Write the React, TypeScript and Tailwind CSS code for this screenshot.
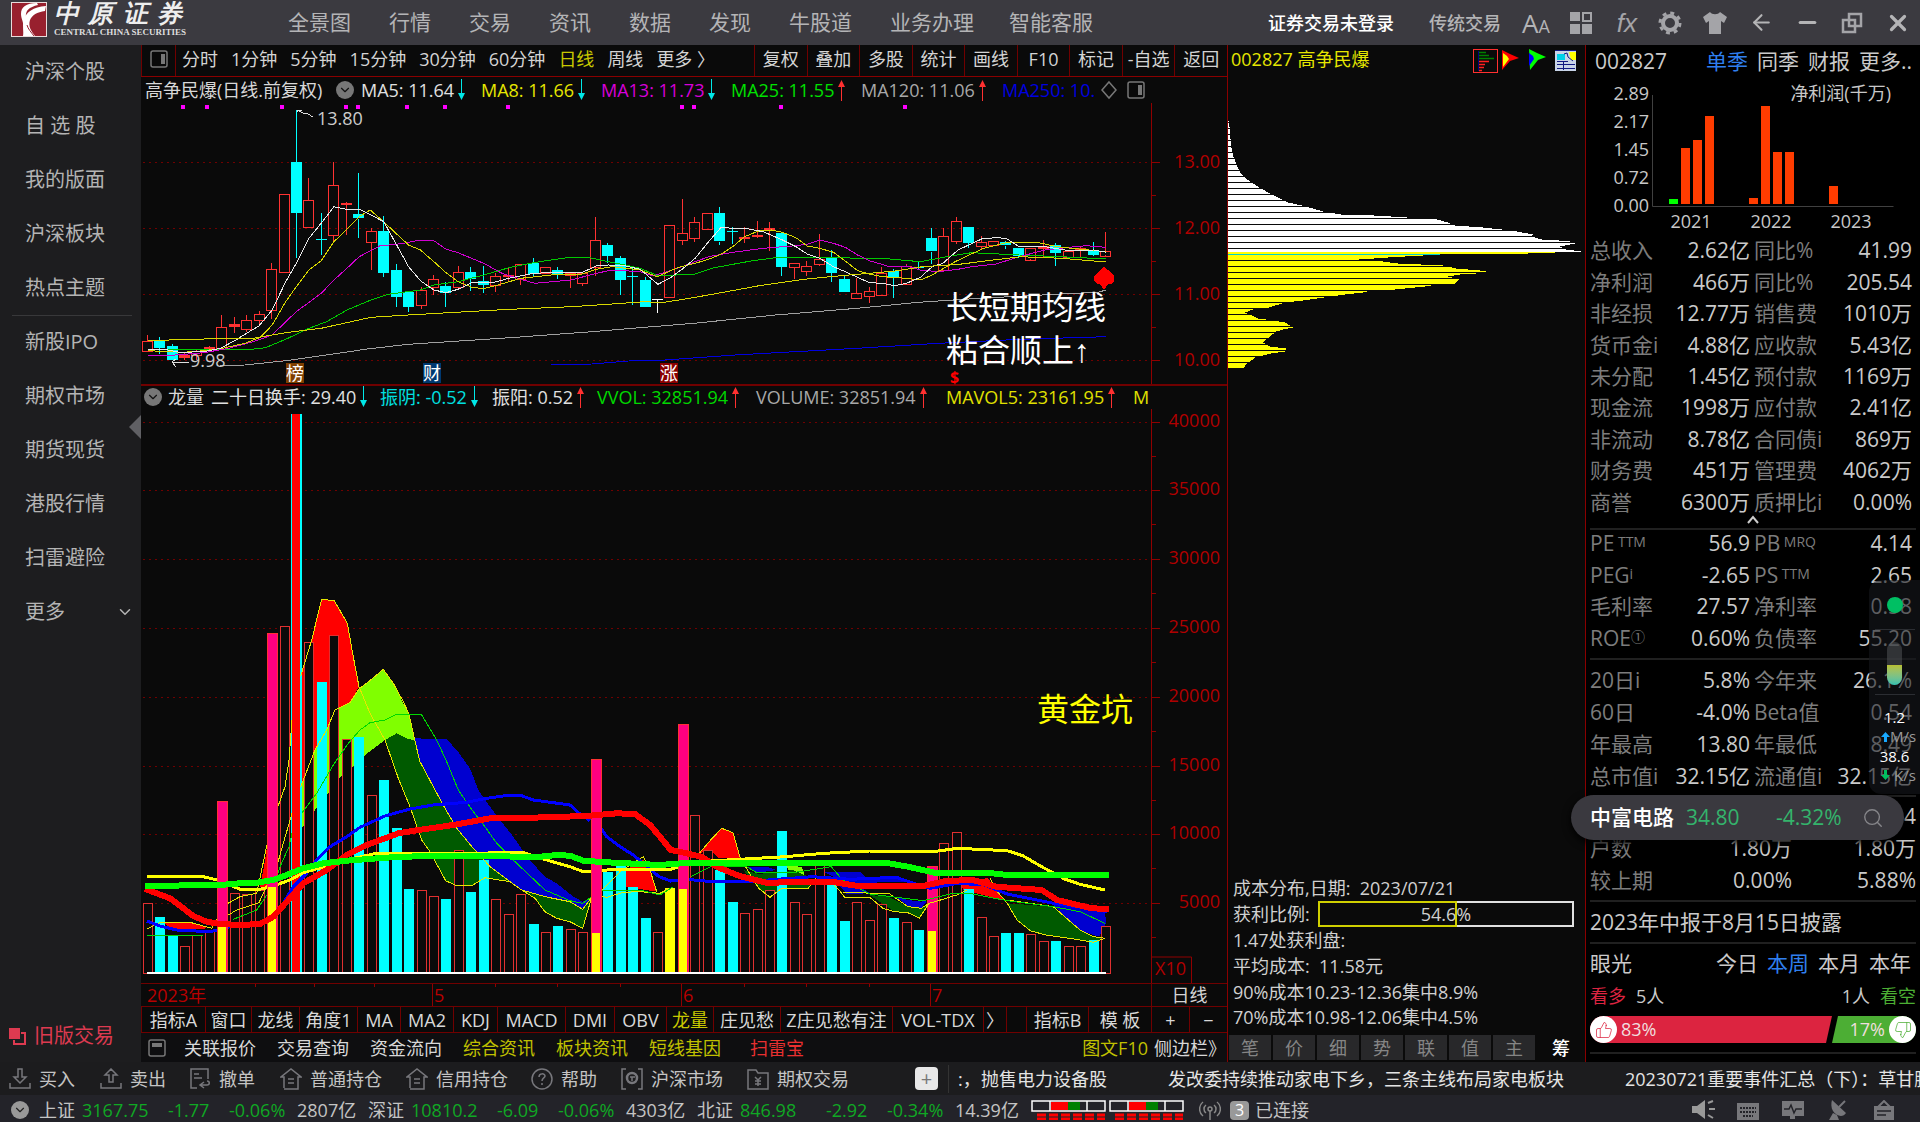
import type { ReactNode } from "react";
import { ArrowLeft, ChevronDown, Minus, Search, ThumbsDown, ThumbsUp, X } from "lucide-react";

const menu = ["全景图", "行情", "交易", "资讯", "数据", "发现", "牛股道", "业务办理", "智能客服"];

const sidebar = [
  "沪深个股",
  "自 选 股",
  "我的版面",
  "沪深板块",
  "热点主题",
  "新股IPO",
  "期权市场",
  "期货现货",
  "港股行情",
  "扫雷避险",
];

const periods = ["分时", "1分钟", "5分钟", "15分钟", "30分钟", "60分钟", "日线", "周线", "更多 〉"];
const tools = ["复权", "叠加", "多股", "统计", "画线", "F10", "标记", "-自选", "返回"];

type Legend = { text: string; color: string; width: string; dir?: "up" | "down" };

const maLegend: Legend[] = [
  { text: "MA5: 11.64", color: "text-[#e0e0e0]", width: "w-[120px]", dir: "down" },
  { text: "MA8: 11.66", color: "text-[#e6e600]", width: "w-[120px]", dir: "down" },
  { text: "MA13: 11.73", color: "text-[#d800d8]", width: "w-[130px]", dir: "down" },
  { text: "MA25: 11.55", color: "text-[#00e000]", width: "w-[130px]", dir: "up" },
  { text: "MA120: 11.06", color: "text-[#a8a8a8]", width: "w-[141px]", dir: "up" },
  { text: "MA250: 10.", color: "text-[#0000e0]", width: "w-[98px]" },
];

const volLegend: Legend[] = [
  { text: "龙量", color: "text-[#d8d8d8]", width: "w-[43px]" },
  { text: "二十日换手: 29.40", color: "text-[#e0e0e0]", width: "w-[169px]", dir: "down" },
  { text: "振阴: -0.52", color: "text-[#00e0e0]", width: "w-[112px]", dir: "down" },
  { text: "振阳: 0.52", color: "text-[#e0e0e0]", width: "w-[105px]", dir: "up" },
  { text: "VVOL: 32851.94", color: "text-[#00d800]", width: "w-[159px]", dir: "up" },
  { text: "VOLUME: 32851.94", color: "text-[#a8a8a8]", width: "w-[190px]", dir: "up" },
  { text: "MAVOL5: 23161.95", color: "text-[#e0e000]", width: "w-[187px]", dir: "up" },
  { text: "M", color: "text-[#e0e000]", width: "w-4" },
];

// r = hollow red, c = solid cyan, w = white; then high, open/close top, bottom, low
type Candle = [string, number, number, number, number];
const candles: Candle[] = [
  ["r", 1005, 1023, 1052, 1057], ["c", 1010, 1023, 1045, 1062], ["c", 1033, 1037, 1078, 1080],
  ["r", 1060, 1065, 1075, 1080], ["r", 1050, 1053, 1065, 1080], ["r", 1038, 1040, 1050, 1052],
  ["r", 945, 982, 1048, 1050], ["r", 950, 973, 982, 998], ["r", 945, 961, 988, 997],
  ["r", 932, 943, 961, 975], ["r", 788, 807, 930, 958], ["r", 583, 583, 817, 817],
  ["c", 330, 486, 638, 773], ["r", 535, 600, 682, 685], ["c", 640, 716, 719, 765],
  ["r", 486, 555, 705, 723], ["r", 606, 608, 614, 705], ["c", 520, 643, 656, 715],
  ["r", 685, 694, 727, 810], ["c", 648, 693, 818, 832], ["c", 792, 810, 890, 922],
  ["c", 877, 877, 922, 936], ["r", 862, 871, 916, 926], ["r", 825, 838, 862, 885],
  ["c", 845, 858, 880, 922], ["r", 797, 817, 862, 868], ["c", 802, 815, 835, 872],
  ["c", 797, 842, 855, 878], ["r", 820, 829, 855, 877], ["r", 803, 825, 830, 845],
  ["r", 793, 793, 838, 855], ["c", 773, 790, 822, 828], ["r", 802, 802, 820, 820],
  ["c", 800, 810, 822, 838], ["r", 815, 820, 828, 863], ["r", 815, 820, 849, 858],
  ["r", 652, 720, 800, 827], ["c", 730, 734, 768, 790], ["c", 768, 774, 840, 886],
  ["c", 805, 829, 832, 915], ["c", 832, 840, 922, 922], ["w", 898, 898, 901, 940],
  ["r", 676, 676, 893, 893], ["r", 598, 700, 722, 735], ["r", 652, 667, 714, 725],
  ["r", 640, 640, 688, 688], ["c", 620, 640, 725, 735], ["c", 680, 694, 697, 733],
  ["r", 680, 710, 716, 728], ["r", 662, 705, 710, 713], ["r", 667, 685, 690, 752],
  ["c", 698, 698, 800, 827], ["r", 790, 790, 803, 836], ["r", 783, 797, 812, 828],
  ["r", 702, 778, 794, 797], ["c", 750, 773, 818, 845], ["c", 827, 837, 877, 877],
  ["r", 835, 880, 894, 896], ["r", 862, 874, 889, 908], ["r", 800, 818, 885, 888],
  ["c", 808, 813, 833, 895], ["r", 792, 797, 852, 852], ["c", 785, 801, 804, 808],
  ["c", 683, 715, 755, 792], ["r", 683, 708, 810, 815], ["r", 652, 664, 725, 733],
  ["c", 680, 680, 728, 745], ["r", 708, 727, 738, 750], ["r", 722, 722, 735, 735],
  ["c", 722, 727, 737, 748], ["c", 743, 743, 768, 775], ["r", 743, 743, 778, 782],
  ["r", 720, 738, 748, 770], ["c", 730, 735, 760, 797], ["r", 752, 752, 770, 770],
  ["r", 738, 745, 752, 775], ["c", 725, 750, 765, 768], ["r", 697, 752, 766, 772],
];

const maLines: [string, string][] = [
  ["#00c800", "362,1048 600,1050 650,1043 700,1018 757,985 800,965 850,930 909,900 950,883 1030,870 1063,855 1122,845 1185,825 1247,803 1306,788 1395,772 1440,772 1490,785 1540,797 1568,805 1612,827 1700,823 1750,803 1840,783 1900,773 2000,773 2160,775 2255,785 2320,770 2380,758 2497,765 2600,770 2710,777"],
  ["#d000d0", "362,1068 430,1065 500,1058 560,1045 620,1025 667,1005 700,965 726,935 787,880 818,840 850,805 880,770 930,738 990,730 1020,722 1063,722 1093,748 1122,758 1185,790 1230,820 1276,838 1310,850 1400,840 1461,820 1500,810 1568,815 1600,828 1660,805 1736,770 1795,757 1870,745 1940,738 1978,733 2008,720 2042,730 2071,742 2101,765 2130,782 2180,800 2221,798 2255,810 2300,815 2347,808 2380,800 2440,792 2497,770 2560,750 2620,742 2660,737 2710,742"],
  ["#d8d800", "362,1052 450,1057 500,1052 545,1045 600,1030 638,1012 667,975 700,905 726,860 757,810 787,782 818,725 850,688 880,650 907,630 940,665 972,702 1001,735 1030,750 1063,785 1093,818 1122,845 1156,862 1185,866 1214,857 1276,835 1350,825 1427,822 1461,808 1500,800 1568,810 1610,830 1660,803 1703,790 1736,778 1766,763 1795,740 1824,710 1860,692 1890,690 1917,697 1950,713 1978,738 2008,745 2042,757 2071,783 2101,812 2130,822 2163,830 2221,835 2255,840 2284,825 2340,785 2380,762 2410,745 2465,728 2540,727 2590,740 2650,748 2710,755"],
  ["#e8e8e8", "362,1047 400,1047 440,1057 500,1055 540,1045 575,1022 604,1000 634,978 667,930 700,845 726,790 757,715 790,665 818,620 850,628 880,628 909,645 940,665 972,735 1001,800 1030,842 1063,870 1093,878 1122,868 1156,848 1214,846 1247,835 1306,820 1368,817 1427,817 1461,798 1490,795 1530,797 1568,808 1582,822 1612,853 1643,833 1674,805 1703,775 1736,725 1766,683 1830,686 1870,695 1917,720 1950,740 1978,762 2008,775 2042,800 2071,815 2101,832 2130,848 2163,850 2192,857 2221,850 2255,832 2284,800 2310,790 2347,750 2405,717 2440,713 2465,715 2497,740 2560,740 2620,752 2680,750 2710,757"],
  ["#d8d800", "362,1023 450,1018 620,1015 700,998 787,985 909,952 1000,945 1100,938 1250,928 1400,920 1500,912 1580,905 1620,908 1690,895 1780,875 1860,857 1970,838 2060,827 2130,820 2200,812 2260,800 2350,793 2420,782 2500,770 2600,775 2710,786"],
  ["#a0a0a0", "540,1097 600,1095 700,1082 800,1065 900,1047 1000,1033 1250,1013 1450,995 1568,983 1700,970 1900,945 2100,925 2250,907 2400,895 2600,882 2690,877 2710,870"],
  ["#0000e0", "1350,1095 1450,1092 1540,1083 1630,1080 1800,1065 2100,1045 2300,1030 2500,1018 2710,1010"],
];

// p = pink over yellow (third value is where the yellow starts), y = yellow
type Volume = [string, number, number?];
const volumes: Volume[] = [
  ["r", 640], ["c", 680], ["c", 737], ["r", 767], ["r", 735], ["r", 720], ["p", 333, 700], ["r", 608],
  ["r", 612], ["r", 600], ["p", -170, 590], ["r", -192], ["x", -828], ["r", -143], ["c", -23], ["r", -165],
  ["r", 146], ["c", 140], ["r", 316], ["c", 270], ["c", 414], ["c", 598], ["r", 600], ["r", 618],
  ["c", 626], ["r", 480], ["c", 607], ["c", 510], ["r", 628], ["r", 672], ["r", 613], ["c", 703],
  ["r", 725], ["c", 707], ["r", 716], ["r", 725], ["p", 208, 728], ["c", 545], ["c", 510], ["c", 590],
  ["c", 685], ["r", 725], ["y", 595], ["p", 103, 597], ["r", 375], ["r", 480], ["c", 540], ["c", 635],
  ["r", 668], ["r", 658], ["r", 600], ["c", 423], ["r", 637], ["r", 672], ["r", 525], ["c", 580],
  ["c", 693], ["r", 637], ["r", 690], ["r", 642], ["c", 685], ["r", 695], ["c", 720], ["p", 527, 723],
  ["r", 460], ["r", 425], ["c", 598], ["r", 682], ["r", 737], ["c", 730], ["c", 730], ["r", 732],
  ["r", 753], ["c", 752], ["r", 767], ["r", 767], ["c", 750], ["r", 708],
];

const areas: [string, string][] = [
  ["#ff0000", "482,-42 515,-150 545,-272 583,-268 622,-200 640,-100 657,-10 630,38 585,60 560,120 525,180 490,270 482,290"],
  ["#80ff00", "585,60 630,38 657,-3 692,-30 730,-62 760,-20 790,40 807,72 824,150 805,147 770,130 735,150 675,195 640,230 597,265 565,310 525,360 482,420 482,290 525,180 560,120"],
  ["#005a00", "735,150 770,130 805,147 824,150 840,215 880,290 915,355 950,415 1000,475 1050,530 1110,575 1035,563 995,587 945,585 917,572 870,485 845,450 810,350 775,265"],
  ["#0000d0", "824,145 920,148 950,180 990,235 1015,300 1050,350 1080,390 1120,440 1160,500 1215,560 1250,580 1300,620 1328,635 1355,620 1328,655 1290,635 1215,620 1145,600 1110,575 1050,530 1000,475 950,415 915,355 880,290 840,215"],
  ["#005a00", "1145,600 1215,620 1290,635 1328,658 1355,622 1328,715 1290,695 1250,685 1215,665 1185,625"],
  ["#ff0000", "75,700 150,697 205,715 100,722"],
  ["#ff0000", "360,590 372,530 384,450 384,600"],
  ["#ff0000", "1458,540 1510,510 1530,540 1550,605 1458,590"],
  ["#ff0000", "1678,490 1712,450 1745,415 1779,428 1801,505 1735,505 1712,480"],
  ["#80ff00", "1940,528 1985,530 2000,572 1950,548"],
  ["#0000d0", "1821,530 1879,530 1908,540 1856,548"],
  ["#005a00", "1810,540 1856,552 1959,540 2005,560 2011,595 1925,595 1890,622 1856,595"],
  ["#0000d0", "2051,545 2160,545 2177,562 2281,565 2304,575 2120,580"],
  ["#0000d0", "2097,585 2166,595 2190,610 2120,612"],
  ["#005a00", "2189,615 2246,620 2304,650 2344,655 2367,640 2338,685 2304,668 2263,665"],
  ["#0000d0", "2269,622 2304,630 2344,635 2361,632 2344,655 2304,648"],
  ["#ff0000", "2459,570 2545,565 2568,600 2596,632 2510,610 2470,600"],
  ["#005a00", "2602,640 2740,650 2774,680 2820,720 2860,740 2895,745 2860,757 2809,748 2717,735 2671,722 2631,690"],
  ["#0000d0", "2740,645 2895,660 2898,700 2878,740 2820,722 2774,680"],
];

const volLines: [string, number, string][] = [
  ["#e6e600", 1, "20,718 60,698 150,697 215,715 255,645 300,620 350,610 384,450"],
  ["#e6e600", 1, "410,360 435,290 447,210 456,90"],
  ["#e6e600", 1, "482,-42 515,-150 545,-272 583,-268 622,-200 640,-100 657,-10 690,70 735,150 775,265 810,350 845,450 870,485 917,572 945,585 995,587 1035,563 1110,575 1145,600 1215,620 1290,635 1328,658 1355,622"],
  ["#e6e600", 1, "240,690 290,660 357,638 384,580"],
  ["#e6e600", 1, "410,530 430,460 456,370"],
  ["#e6e600", 1, "482,290 490,270 525,180 560,120 585,60 630,38 657,-3 692,-30 730,-62 760,-20 790,35 807,72 824,150 840,215 880,290 915,355 950,415 1000,475 1050,530 1110,575 1145,600 1185,625 1215,665 1250,685 1290,695 1328,715 1355,622"],
  ["#e6e600", 1, "1382,605 1440,545 1510,500 1530,540 1550,605"],
  ["#e6e600", 1, "1382,618 1400,622 1450,607 1500,605 1560,610 1600,590"],
  ["#e6e600", 1, "1678,490 1712,450 1745,415 1779,428 1801,505 1856,595 1890,622 1925,595 2005,595 2030,560 2063,565 2097,600 2114,622 2189,622 2229,655 2263,665 2304,668 2338,685 2367,640"],
  ["#e6e600", 1, "2108,608 2246,610 2304,650 2344,655 2367,640 2395,632 2450,615 2480,600"],
  ["#e6e600", 1, "2550,565 2568,600 2602,640 2631,690 2671,722 2717,735 2809,748 2860,757 2895,745"],
  ["#e6e600", 1, "2602,630 2740,650 2774,680 2820,720 2860,740 2895,745"],
  ["#00d800", 1, "20,738 190,737"],
  ["#00d800", 1, "280,688 350,660 384,610"],
  ["#00d800", 1, "410,560 420,530 447,470 456,430"],
  ["#00d800", 1, "485,370 530,310 580,225 625,160 660,120 690,98 735,90 770,73 845,75 890,150 920,215 955,300 1000,365 1035,410 1070,460 1125,515 1215,600 1290,632 1328,640 1355,620"],
  ["#00d800", 1, "1385,600 1500,600 1560,615 1600,590"],
  ["#00d800", 1, "1652,560 1712,530 1820,530 1850,548 1959,548 2074,530 2108,570 2189,612 2350,632 2440,610 2487,610 2602,632 2740,650 2820,665 2895,700"],
  ["#0000ff", 3, "20,693 60,708 110,720 210,725 270,710"],
  ["#0000ff", 3, "405,662 430,640 460,590 500,550 530,510 570,470 620,440 660,412 735,378 810,357 880,345 980,337 1040,325 1090,318 1145,317 1180,330 1290,345 1320,372 1350,392"],
  ["#0000ff", 3, "1383,415 1400,440 1440,470 1480,495 1510,520 1557,560 1592,573 1638,568 1695,573 1844,573 2017,560 2131,568 2269,562 2315,578 2372,595 2453,580 2533,585 2602,612 2740,640 2843,655 2900,665"],
  ["#ffff00", 3, "20,560 190,560 240,572 300,598 350,600 400,588 450,570 490,548 620,510 700,492 1150,488 1230,513 1290,530 1330,545 1400,540 1560,538 1592,538 1672,515 1936,500 2051,490 2189,483 2395,483 2453,475 2602,482 2648,497 2705,530 2774,567 2820,583 2895,600"],
  ["#ff0000", 6, "15,597 90,625 130,655 160,678 200,695 240,702 300,705 360,702 400,680 440,635 490,580 560,540 620,495 680,465 735,445 775,430 850,418 940,405 1050,385 1230,382 1350,377 1430,370 1485,372 1530,405 1560,440 1592,480 1626,487 1684,500 1730,530 1798,558 1879,578 2074,575 2154,588 2350,588 2418,573 2499,570 2568,590 2705,600 2751,630 2855,655 2906,657"],
  ["#00ff00", 6, "15,587 230,586 300,580 350,578 400,570 440,555 490,535 550,520 620,512 735,503 850,498 950,497 1150,500 1185,502 1250,495 1290,497 1330,512 1400,517 1560,525 1626,520 2246,520 2304,530 2384,548 2556,550 2602,555 2906,555"],
];

// y, width of the chip distribution outline
const chips: [number, number][] = [
  [120, 1], [133, 2], [145, 3], [155, 5], [165, 9], [172, 12], [178, 18], [185, 28], [192, 40], [198, 52],
  [202, 60], [206, 78], [211, 95], [214, 113], [215, 146], [217, 179], [219, 209], [222, 220], [225, 227],
  [227, 255], [230, 283], [234, 305], [236, 303], [239, 314], [240, 331], [242, 352], [246, 332], [249, 338],
  [251, 353], [253, 300], [254, 212], [257, 160], [259, 131], [260, 147], [263, 170], [265, 215], [268, 228],
  [270, 252], [272, 263], [274, 232], [276, 220], [279, 231], [283, 227], [284, 209], [286, 197], [289, 167],
  [290, 143], [292, 135], [294, 117], [297, 96], [300, 75], [302, 57], [307, 41], [309, 25], [312, 17],
  [318, 30], [320, 45], [322, 57], [327, 65], [329, 55], [331, 48], [335, 43], [342, 35], [346, 42],
  [348, 58], [351, 57], [353, 43], [357, 27], [361, 22], [364, 18], [367, 16],
];

const financials = [
  ["总收入", "2.62亿", "同比%", "41.99"],
  ["净利润", "466万", "同比%", "205.54"],
  ["非经损", "12.77万", "销售费", "1010万"],
  ["货币金i", "4.88亿", "应收款", "5.43亿"],
  ["未分配", "1.45亿", "预付款", "1169万"],
  ["现金流", "1998万", "应付款", "2.41亿"],
  ["非流动", "8.78亿", "合同债i", "869万"],
  ["财务费", "451万", "管理费", "4062万"],
  ["商誉", "6300万", "质押比i", "0.00%"],
];
const ratios = [
  ["PE^ TTM", "56.9", "PB^ MRQ", "4.14"],
  ["PEG^i", "-2.65", "PS^ TTM", "2.65"],
  ["毛利率", "27.57", "净利率", "0.58"],
  ["ROE^①", "0.60%", "负债率", "55.20"],
];
const market = [
  ["20日i", "5.8%", "今年来", "26.1%"],
  ["60日", "-4.0%", "Beta值", "0.54"],
  ["年最高", "13.80", "年最低", "8.49"],
  ["总市值i", "32.15亿", "流通值i", "32.15亿"],
];

const profitBars = [
  [1669, 199, "#00ff00"], [1681, 148, "#ff3c00"], [1693, 140, "#ff3c00"], [1705, 116, "#ff3c00"],
  [1749, 198, "#ff3c00"], [1761, 106, "#ff3c00"], [1773, 152, "#ff3c00"], [1785, 152, "#ff3c00"],
  [1829, 186, "#ff3c00"],
] as [number, number, string][];

const indicators: [string, string][] = [
  ["指标A", "w-[64px]"], ["窗口", "w-[46px]"], ["龙线", "w-[48px]"], ["角度1", "w-[58px]"], ["MA", "w-[43px]"],
  ["MA2", "w-[53px]"], ["KDJ", "w-[44px]"], ["MACD", "w-[68px]"], ["DMI", "w-[49px]"], ["OBV", "w-[52px]"],
  ["龙量", "w-[47px]"], ["庄见愁", "w-[67px]"], ["Z庄见愁有注", "w-[112px]"], ["VOL-TDX", "w-[91px]"],
  ["〉", "w-[23px]"], ["", "w-[20px]"], ["指标B", "w-[62px]"], ["模 板", "w-[63px]"], ["+", "w-[38px]"],
  ["−", "w-[38px]"],
];

const barX = (i: number) => 147.7 + i * 12.446;

const toPoints = (raw: string, fx: (n: number) => number, fy: (n: number) => number) =>
  raw
    .split(" ")
    .map((p) => {
      const [x, y] = p.split(",").map(Number);
      return `${fx(x).toFixed(1)},${fy(y).toFixed(1)}`;
    })
    .join(" ");

const priceX = (n: number) => n / 2.45;
const priceY = (n: number) => n / 3;
const volX = (n: number) => 140 + n / 3;
const volY = (n: number) => 690 + n / 3;

const chipWidth = (y: number) => {
  const i = chips.findIndex(([cy]) => cy >= y);
  if (i <= 0) return chips[0][1];
  const [y0, w0] = chips[i - 1];
  const [y1, w1] = chips[i];
  return w0 + ((w1 - w0) * (y - y0)) / (y1 - y0);
};

const Arrow = ({ dir }: { dir: "up" | "down" }) => (
  <svg width="9" height="22" viewBox="0 0 9 22" className="ml-[3px] shrink-0">
    {dir === "down" ? (
      <path d="M4 0h1v14h3l-3.500 7-3.500-7h3z" fill="#00e8e8" />
    ) : (
      <path d="M4 22h1v-14h3l-3.500-7-3.500 7h3z" fill="#ff3030" />
    )}
  </svg>
);

const LegendItem = ({ item }: { item: Legend }) => (
  <div className={`flex shrink-0 items-center whitespace-pre ${item.width} ${item.color}`}>
    {item.text}
    {item.dir && <Arrow dir={item.dir} />}
  </div>
);

const RoundToggle = ({ label }: { label: string }) => (
  <button aria-label={label} className="flex size-[18px] shrink-0 items-center justify-center rounded-full bg-[#777] text-[#111]">
    <ChevronDown size={14} />
  </button>
);

const PanelIcon = () => (
  <svg width="18" height="18" viewBox="0 0 18 18" className="shrink-0">
    <rect x="1" y="1" width="16" height="16" rx="2" fill="none" stroke="#777" strokeWidth="1.500" />
    <rect x="11" y="4" width="4" height="10" fill="#777" />
  </svg>
);

const Logo = () => (
  <div className="flex w-[288px] shrink-0 gap-[7px] pl-[11px] pt-[2px]">
    <svg width="36" height="35" viewBox="0 0 36 35">
      <rect width="36" height="35" fill="#e8dcdc" />
      <rect x="1" y="1" width="34" height="33" fill="#98202e" />
      <path d="M26 1C15 1 10 5 10 12C10 17 13 20 12 25C15 22 16 19 15 15C14 9 18 5 27 3z" fill="#fff" />
      <path d="M35 4C22 5 15 10 13 18C11 25 13 30 12 34H24C20 29 17 24 19 18C21 13 26 10 34 9z" fill="#fff" />
      <path d="M16 23C17 27 20 30 23 34" fill="none" stroke="#98202e" strokeWidth="1" />
    </svg>
    <div className="w-[128px]">
      <div className="flex h-6 justify-between font-serif text-[25px] font-bold italic leading-6 text-[#eee]">
        <span>中</span>
        <span>原</span>
        <span>证</span>
        <span>券</span>
      </div>
      <p className="whitespace-nowrap font-['Liberation_Serif',serif] text-[9px] font-bold leading-3 text-[#ddd]">
        CENTRAL CHINA SECURITIES
      </p>
    </div>
  </div>
);

const Header = () => (
  <header className="flex h-[45px] shrink-0 bg-[#3b3a40] text-[#b4b4b6]">
    <Logo />
    <nav className="flex h-9 flex-1 gap-[38px] text-[21px] leading-[45px]">
      {menu.map((m, i) => (
        <a key={m} href="#" className={i > 7 ? "-ml-[3px] whitespace-nowrap" : "whitespace-nowrap"}>
          {m}
        </a>
      ))}
    </nav>
    <div className="flex h-[45px] items-center pr-[9px]">
      <button className="mr-[35px] text-lg font-medium text-white">证券交易未登录</button>
      <button className="mr-[21px] text-lg font-medium">传统交易</button>
      <button aria-label="字体" className="mr-5 flex items-baseline">
        <span className="text-[26px] leading-none">A</span>
        <span className="text-lg leading-none">A</span>
      </button>
      <button aria-label="布局" className="mr-[25px]">
        <svg width="22" height="22" viewBox="0 0 22 22" fill="#a4a4a8">
          <path d="M0 0h10v9H0zM0 12h10v10H0zM12 12h10v10H12z" />
          <path d="M13 1h8v8h-8z" fill="none" stroke="#a4a4a8" strokeWidth="2" />
        </svg>
      </button>
      <button aria-label="公式" className="mr-[21px] font-['Liberation_Sans',sans-serif] text-[26px] italic leading-none text-[#a4a4a8]">
        fx
      </button>
      <button aria-label="设置" className="mr-[21px]">
        <svg width="24" height="24" viewBox="0 0 24 24" stroke="#a4a4a8" fill="none">
          <circle cx="12" cy="12" r="7" strokeWidth="4" />
          <circle cx="12" cy="12" r="10" strokeWidth="3" strokeDasharray="3.900 3.950" />
        </svg>
      </button>
      <button aria-label="皮肤" className="mr-[22px]">
        <svg width="24" height="22" viewBox="0 0 24 22" fill="#a4a4a8">
          <path d="M7 0c2 3 8 3 10 0l7 5-3 6-3-2v13H6V9l-3 2-3-6z" />
        </svg>
      </button>
      <button aria-label="后退" className="mr-[21px]"><ArrowLeft size={25} /></button>
      <button aria-label="最小化" className="mr-[21px]"><Minus size={25} strokeWidth={3} /></button>
      <button aria-label="还原" className="mr-[22px]">
        <svg width="22" height="22" viewBox="0 0 22 22" fill="none" stroke="#a4a4a8" strokeWidth="2.500">
          <path d="M8 2h12v12H8zM2 8h12v12H2z" />
        </svg>
      </button>
      <button aria-label="关闭"><X size={26} strokeWidth={3} /></button>
    </div>
  </header>
);

const Sidebar = () => (
  <aside className="relative flex w-[141px] shrink-0 flex-col bg-[#1d1d1f] text-xl text-[#b4b4b4]">
    {sidebar.map((s) => (
      <div key={s}>
        {s === "新股IPO" && <div className="-mb-px ml-3 h-px w-30 bg-[#38383a]" />}
        <a href="#" className="flex h-[54px] items-center pl-[25px]">
          {s}
        </a>
      </div>
    ))}
    <button className="flex h-[54px] items-center justify-between pl-[25px] pr-[7px]">
      更多 <ChevronDown size={18} />
    </button>
    <button className="mb-[12px] mt-auto flex items-center gap-[8px] pl-[9px] text-[#dd3a50]">
      <svg width="17" height="17" viewBox="0 0 17 17">
        <rect width="11" height="11" fill="#dd3a50" />
        <path d="M12 5h4v11H5v-4" fill="none" stroke="#dd3a50" strokeWidth="2" />
      </svg>
      旧版交易
    </button>
    <button aria-label="收起" className="absolute right-0 top-[370px]">
      <svg width="12" height="24" viewBox="0 0 12 24" fill="#606064">
        <path d="M12 0v24L0 12z" />
      </svg>
    </button>
  </aside>
);

const PriceChart = () => (
  <div className="relative flex h-[281px]">
    <svg viewBox="141 103 1010 281" preserveAspectRatio="none" className="h-full min-w-0 flex-1" shapeRendering="crispEdges">
      {[162, 228, 294, 360].map((y) => (
        <line key={y} x1="143" x2="1151" y1={y + 0.5} y2={y + 0.5} stroke="#700000" strokeDasharray="2 4" />
      ))}
      {[183, 207, 282, 346, 358, 407, 445, 508, 682, 694, 781, 905].map((x) => (
        <rect key={x} x={x - 2} y="105" width="4" height="4" fill="#ff00ff" />
      ))}
      {candles.map(([kind, high, top, bottom, low], i) => {
        const x = Math.round(barX(i)) - 1;
        const color = kind === "r" ? "#ff3232" : kind === "c" ? "#00ffff" : "#ffffff";
        const y = Math.round(top / 3);
        const h = Math.max(1, Math.round((bottom - top) / 3));
        const open = kind === "r" && h > 3;
        return (
          <g key={i}>
            <line x1={x + 0.5} x2={x + 0.5} y1={high / 3} y2={top / 3} stroke={color} />
            <line x1={x + 0.5} x2={x + 0.5} y1={bottom / 3} y2={low / 3} stroke={color} />
            {open ? (
              <rect x={x - 4.5} y={y + 0.5} width="10" height={h} fill="none" stroke={color} />
            ) : (
              <rect x={x - 5} y={y} width="11" height={h} fill={color} />
            )}
          </g>
        );
      })}
      {maLines.map(([color, pts], i) => (
        <polyline key={i} points={toPoints(pts, priceX, priceY)} fill="none" stroke={color} />
      ))}
      <path d="M1104 267l4 3 6 6v5l-3 3h-3l-4 6-4-6h-3l-3-3v-5l6-6z" fill="#ff0000" />
      <path d="M297 112v-2l5 0M297 110l6 3 5 1 5 3M172 362h17M172 362l4-3M172 362l4 5" fill="none" stroke="#ddd" />
    </svg>
    <svg width="76" height="281" viewBox="1151 103 76 281" className="shrink-0" fill="#b00000">
      <path d="M1151.500 103v281M1152 162.500h8M1152 195.500h4M1152 228.500h8M1152 261.500h4M1152 294.500h8M1152 327.500h4M1152 360.500h8" stroke="#900000" fill="none" />
      {["13.00", "12.00", "11.00", "10.00"].map((t, i) => (
        <text key={t} x="1220" y={168 + i * 66} textAnchor="end" fontSize="18">
          {t}
        </text>
      ))}
    </svg>
    <span className="absolute left-[176px] top-[5px] text-lg leading-5 text-[#ccc]">13.80</span>
    <span className="absolute left-[49px] top-[247px] text-lg leading-5 text-[#ccc]">9.98</span>
    <p className="absolute left-[805px] top-[182px] text-[32px] leading-[43px] text-white">
      长短期均线
      <br />
      粘合顺上<span className="font-['Liberation_Sans',sans-serif]">↑</span>
    </p>
    <span className="absolute left-[145px] top-[260px] bg-[#7f3f00] text-lg leading-5 text-white">榜</span>
    <span className="absolute left-[282px] top-[260px] bg-[#003870] text-lg leading-5 text-white">财</span>
    <span className="absolute left-[519px] top-[260px] bg-[#8a0000] text-lg leading-5 text-white">涨</span>
    <span className="absolute left-[809px] top-[266px] text-base font-bold leading-4 text-[#ff0000]">$</span>
  </div>
);

const VolumeBar = ({ bar, i }: { bar: Volume; i: number }) => {
  const [kind, top, split] = bar;
  const x = Math.round(barX(i)) - 5;
  const y = Math.round(volY(top));
  const h = 973 - y;
  if (kind === "r") return <rect x={x + 0.5} y={y + 0.5} width="9" height={h} fill="#0a0a0a" stroke="#e03030" />;
  if (kind === "x")
    return (
      <>
        <rect x={x - 1} y={y} width="11" height={h} fill="#00ffff" />
        <rect x={x} y={y} width="8" height={h} fill="#ff0000" />
      </>
    );
  if (kind === "p")
    return (
      <>
        <rect x={x} y={y} width="10" height={h} fill="#ff0080" stroke="#ff3232" />
        <rect x={x + 1} y={volY(split!)} width="8" height={973 - volY(split!)} fill="#ffff00" />
      </>
    );
  return <rect x={x} y={y} width="10" height={h} fill={kind === "y" ? "#ffff00" : "#00ffff"} />;
};

const volTicks = [422, 490, 559, 628, 697, 766, 834, 903];

const VolumeChart = () => (
  <div className="relative flex h-[574px]">
    <svg viewBox="141 409 1010 574" preserveAspectRatio="none" className="h-full min-w-0 flex-1" shapeRendering="crispEdges">
      {volTicks.map((y) => (
        <line key={y} x1="143" x2="1151" y1={y + 0.5} y2={y + 0.5} stroke="#700000" strokeDasharray="2 4" />
      ))}
      {areas.map(([color, pts], i) => (
        <polygon key={i} points={toPoints(pts, volX, volY)} fill={color} />
      ))}
      {volumes.map((bar, i) => (
        <VolumeBar key={i} bar={bar} i={i} />
      ))}
      {volLines.map(([color, width, pts], i) => (
        <polyline key={i} points={toPoints(pts, volX, volY)} fill="none" stroke={color} strokeWidth={width} />
      ))}
      {volumes.map((bar, i) => bar[0] === "p" && bar[1] < 500 && <VolumeBar key={i} bar={bar} i={i} />)}
      {volLines.slice(-2).map(([color, width, pts]) => (
        <polyline key={color} points={toPoints(pts, volX, volY)} fill="none" stroke={color} strokeWidth={width} />
      ))}
      <rect x="147" y="972" width="959" height="2" fill="#fff" />
    </svg>
    <svg width="76" height="574" viewBox="1151 409 76 574" className="shrink-0" fill="#b00000">
      <path d="M1151.500 409v574M1191.500 983v-26h-40" stroke="#900000" fill="none" />
      {volTicks.map((y, i) => (
        <g key={y}>
          <path d={`M1152 ${y + 0.5}h8M1152 ${y + 34.5}h4`} stroke="#900000" />
          <text x="1220" y={y + 5} textAnchor="end" fontSize="18">
            {40000 - i * 5000}
          </text>
        </g>
      ))}
      <text x="1155" y="975" fontSize="18">
        X10
      </text>
    </svg>
    <p className="absolute left-[896px] top-[278px] text-[32px] leading-[44px] text-[#ffff00]">黄金坑</p>
  </div>
);

const QuoteToolbar = () => (
  <div className="flex h-8 border-b border-[#8a0000] text-lg text-[#d4d4d4]">
    <button aria-label="面板" className="flex w-[35px] items-center justify-center border-x border-[#700000] pb-1">
      <PanelIcon />
    </button>
    <div className="flex flex-1 items-center gap-[13px] overflow-hidden pb-[3px] pl-[6px]">
      {periods.map((p) => (
        <button key={p} className={p === "日线" ? "whitespace-nowrap text-[#c8c800]" : "whitespace-nowrap"}>
          {p}
        </button>
      ))}
    </div>
    <div className="grid w-[473px] grid-cols-9">
      {tools.map((t) => (
        <button key={t} className="whitespace-nowrap border-l border-[#700000] pb-[3px]">
          {t}
        </button>
      ))}
    </div>
  </div>
);

const ChartPanel = () => (
  <main className="flex min-w-0 flex-1 flex-col border-r border-[#8a0000] bg-[#0a0a0a]">
    <QuoteToolbar />
    <div className="flex h-[26px] items-center overflow-hidden pb-px pl-1 text-lg">
      <span className="w-[191px] shrink-0 whitespace-nowrap text-[#d8d8d8]">高争民爆(日线.前复权)</span>
      <RoundToggle label="主图指标" />
      <div className="ml-[7px] flex">
        {maLegend.map((l) => (
          <LegendItem key={l.text} item={l} />
        ))}
      </div>
      <svg width="18" height="20" viewBox="0 0 18 20" className="shrink-0">
        <path d="M9 2l7 8-7 8-7-8z" fill="none" stroke="#777" strokeWidth="1.500" />
      </svg>
      <div className="ml-[9px]"><PanelIcon /></div>
    </div>
    <PriceChart />
    <div className="flex h-[25px] items-center overflow-hidden border-t-2 border-[#700000] pb-[2px] pl-[3px] text-lg">
      <RoundToggle label="副图指标" />
      <div className="ml-[6px] flex">
        {volLegend.map((l) => (
          <LegendItem key={l.text} item={l} />
        ))}
      </div>
    </div>
    <VolumeChart />
    <div className="flex h-6 border-y border-[#700000] text-lg leading-[22px]">
      <svg viewBox="141 983 1010 22" preserveAspectRatio="none" className="h-[22px] min-w-0 flex-1" fill="#b80000" fontSize="18">
        <path d="M255.500 983v3M314.500 983v3M374.500 983v3M432.500 983v22M495.500 983v3M557.500 983v3M620.500 983v3M681.500 983v22M744.500 983v3M806.500 983v3M869.500 983v3M930.500 983v22" stroke="#900000" />
        <text x="147" y="1001">2023年</text>
        <text x="434" y="1001">5</text>
        <text x="683" y="1001">6</text>
        <text x="932" y="1001">7</text>
      </svg>
      <button className="w-[76px] border-l border-[#700000] text-[#d4d4d4]">日线</button>
    </div>
    <div className="flex h-[26px] border-b border-[#700000] text-lg leading-6 text-[#d8d8d8]">
      {indicators.map(([t, w]) => (
        <button key={w + t} className={`grow whitespace-nowrap border-l border-[#700000] ${w} ${t === "龙量" ? "text-[#c8c800]" : ""}`}>
          {t}
        </button>
      ))}
    </div>
    <div className="flex h-[29px] items-center gap-[21px] bg-[#0e0e10] pl-[7px] pr-[6px] text-lg text-[#d8d8d8]">
      <svg width="18" height="18" viewBox="0 0 18 18" className="mr-[-3px]">
        <rect x="1" y="1" width="16" height="16" rx="2" fill="none" stroke="#777" strokeWidth="1.500" />
        <rect x="4" y="4" width="10" height="4" fill="#777" />
      </svg>
      <a href="#">关联报价</a>
      <a href="#">交易查询</a>
      <a href="#">资金流向</a>
      <a href="#" className="text-[#c0c000]">综合资讯</a>
      <a href="#" className="text-[#c0c000]">板块资讯</a>
      <a href="#" className="text-[#c0c000]">短线基因</a>
      <a href="#" className="ml-2 text-[#e83030]">扫雷宝</a>
      <a href="#" className="ml-auto mr-[-15px] text-[#c0c000]">图文F10</a>
      <a href="#" className="-mr-[5px]">侧边栏》</a>
    </div>
  </main>
);

const CostPanel = () => (
  <section className="flex w-[358px] shrink-0 flex-col border-r border-[#8a0000] bg-[#0a0a0a] text-lg text-[#d0d0d0]">
    <div className="flex h-[31px] items-center pl-[3px] pr-2">
      <h2 className="mr-auto pb-1 text-[#e6e600]">002827 高争民爆</h2>
      <svg width="104" height="26" viewBox="0 0 104 26">
        <rect x="0.500" y="1.500" width="24" height="23" fill="none" stroke="#ff3030" />
        <path d="M6 4.500h7M6 7.500h10M6 10.500h15" stroke="#008000" strokeWidth="1.500" />
        <path d="M6 13.500h10M6 16.500h6M6 19.500h5M6 22.500h3" stroke="#ff2020" strokeWidth="1.500" />
        <path d="M5.500 3v20" stroke="#000080" />
        <path d="M29 2l8 4 9 4-9 3-8 9z" fill="#ff0000" />
        <path d="M30 5l4 3 2 3-6 8z" fill="#ffff00" />
        <path d="M56 1l8 4 9 4-8 3-8 10z" fill="#00ff00" />
        <path d="M56 5l4 3 1 3-5 7z" fill="#0000ff" />
        <rect x="82" y="2" width="21" height="21" fill="#c8d4e8" />
        <path d="M96 4h7v8h-5z" fill="#ffff00" />
        <path d="M84 6h8v6h-8z" fill="#00d0e8" />
        <path d="M82 2.500h21M84 13.500h11M84 16.500h18M84 20.500h18M90.500 14v8M91 6l3-1 1 4 5 4" fill="none" stroke="#101880" />
      </svg>
    </div>
    <svg height="300" viewBox="1228 76 357 300" preserveAspectRatio="none" className="w-full" shapeRendering="crispEdges">
      {Array.from({ length: 247 }, (_, k) => 121 + k)
        .filter((y) => y % 6 !== 2 || y === 254)
        .map((y) => (
          <rect
            key={y}
            x="1228"
            y={y}
            width={chipWidth(y)}
            height="1"
            fill={y < 252 ? "#ffffff" : y === 254 ? "#00d0d0" : "#ffff00"}
          />
        ))}
    </svg>
    <dl className="mb-[6px] mt-auto flex flex-col gap-px pl-[5px] text-lg leading-6">
      <div className="whitespace-pre">成本分布,日期:  2023/07/21</div>
      <div className="my-px flex items-center gap-2">
        <span className="w-[77px]">获利比例:</span>
        <div className="relative -my-px mr-[11px] flex h-[26px] flex-1 border-2 border-[#e0e0e0]">
          <div className="-m-[2px] w-[55%] border-2 border-[#d0d000]" />
          <span className="absolute inset-0 text-center leading-[22px]">54.6%</span>
        </div>
      </div>
      <div>1.47处获利盘:</div>
      <div className="mt-px whitespace-pre">平均成本:  11.58元</div>
      <div className="mt-px">90%成本10.23-12.36集中8.9%</div>
      <div>70%成本10.98-12.06集中4.5%</div>
    </dl>
    <div className="mb-[2px] flex h-[25px] gap-[2px] pl-px text-[#858585]">
      {["笔", "价", "细", "势", "联", "值", "主"].map((t) => (
        <button key={t} className="w-[42px] bg-[#28282a] leading-6">
          {t}
        </button>
      ))}
      <button className="flex-1 font-medium leading-6 text-white">筹</button>
    </div>
  </section>
);

const Label = ({ text }: { text: string }) => {
  const [main, sup] = text.split("^");
  return (
    <>
      {main}
      {sup && <span className="relative -top-1 whitespace-pre text-sm leading-none">{sup}</span>}
    </>
  );
};

const DataTable = ({ rows, height }: { rows: string[][]; height: string }) => (
  <table className={`w-full table-fixed text-[21px] leading-none ${height}`}>
    <colgroup>
      <col className="w-[72px]" />
      <col className="w-[88px]" />
      <col className="w-[78px]" />
      <col className="w-[84px]" />
    </colgroup>
    <tbody>
      {rows.map((r, i) => (
        <tr key={i} className="whitespace-nowrap">
          <th className="p-0 text-left font-normal text-[#7c7c7c]"><Label text={r[0]} /></th>
          <td className="p-0 text-right"><span className="float-right">{r[1]}</span></td>
          <th className="p-0 pl-1 text-left font-normal text-[#7c7c7c]"><Label text={r[2]} /></th>
          <td className="p-0"><span className="float-right">{r[3]}</span></td>
        </tr>
      ))}
    </tbody>
  </table>
);

const Rule = () => <div className="h-[2px] w-full bg-[#202020]" />;

const ProfitChart = () => (
  <svg width="332" height="154" viewBox="1586 81 332 154" fill="#c8c8c8" fontSize="18">
    <text x="1891" y="100" textAnchor="end">净利润(千万)</text>
    {["2.89", "2.17", "1.45", "0.72", "0.00"].map((t, i) => (
      <text key={t} x="1649" y={100 + i * 28} textAnchor="end">
        {t}
      </text>
    ))}
    <path d="M1652.500 95v111.500h241" stroke="#404040" fill="none" />
    {profitBars.map(([x, y, c]) => (
      <rect key={x} x={x} y={y} width="9" height={204 - y} fill={c} />
    ))}
    <text x="1691" y="228" textAnchor="middle">2021</text>
    <text x="1771" y="228" textAnchor="middle">2022</text>
    <text x="1851" y="228" textAnchor="middle">2023</text>
  </svg>
);

const InfoPanel = () => (
  <aside className="flex w-[334px] shrink-0 flex-col bg-black text-[#cacaca]">
    <div className="flex h-9 items-center gap-[9px] pb-[3px] pl-[9px] pr-2 text-[21px]">
      <h2 className="mr-auto">002827</h2>
      <button className="text-[#2f7fee]">单季</button>
      <button>同季</button>
      <button>财报</button>
      <button>更多..</button>
    </div>
    <ProfitChart />
    <div className="px-1">
      <div className="pr-1">
        <DataTable rows={financials} height="h-[283px]" />
      </div>
      <div className="-mb-1 flex h-[14px] justify-center text-white">
        <svg width="12" height="9" viewBox="0 0 12 9" className="-mt-[3px]">
          <path d="M1 8l5-6 5 6" fill="none" stroke="#ccc" strokeWidth="2" />
        </svg>
      </div>
      <Rule />
      <div className="-mt-[2px] pr-1"><DataTable rows={ratios} height="h-[126px]" /></div>
      <div className="mt-1"><Rule /></div>
      <div className="pb-[3px] pr-1 pt-[5px]"><DataTable rows={market} height="h-[127px]" /></div>
      <Rule />
      <table className="mb-[4px] mt-1 h-[95px] w-full text-[21px] leading-none">
        <tbody>
          {[
            ["户均", "", "4"],
            ["户数", "1.80万", "1.80万"],
            ["较上期", "0.00%", "5.88%"],
          ].map((r) => (
            <tr key={r[0]}>
              <th className="w-[72px] p-0 text-left font-normal text-[#7c7c7c]">{r[0]}</th>
              <td className="w-[130px] p-0 text-right">{r[1]}</td>
              <td className="p-0 text-right">{r[2]}</td>
            </tr>
          ))}
        </tbody>
      </table>
      <Rule />
      <p className="text-[21px] leading-10">2023年中报于8月15日披露</p>
      <Rule />
      <div className="flex h-10 items-center gap-[9px] pr-[5px] text-[21px]">
        <span className="mr-auto">眼光</span>
        <button>今日</button>
        <button className="text-[#2f7fee]">本周</button>
        <button>本月</button>
        <button>本年</button>
      </div>
      <div className="flex h-6 items-center gap-[10px] text-lg">
        <span className="text-[#dc2440]">看多</span>
        <span className="mr-auto">5人</span>
        <span>1人</span>
        <span className="text-[#4cae34]">看空</span>
      </div>
      <div className="mb-[9px] mt-2 flex h-[27px] text-lg leading-[27px] text-[#f0dede]">
        <div className="flex flex-1 items-center gap-1 rounded-l-full bg-[#dc2440] [clip-path:polygon(0_0,100%_0,calc(100%-6px)_100%,0_100%)]">
          <span className="flex size-[27px] items-center justify-center rounded-full bg-white text-[#dc2440]">
            <ThumbsUp size={18} strokeWidth={1} />
          </span>
          83%
        </div>
        <div className="flex w-[84px] items-center justify-end gap-1 rounded-r-full bg-[#4cae34] [clip-path:polygon(6px_0,100%_0,100%_100%,0_100%)]">
          17%
          <span className="flex size-[27px] items-center justify-center rounded-full bg-white text-[#4cae34]">
            <ThumbsDown size={18} strokeWidth={1} />
          </span>
        </div>
      </div>
      <Rule />
    </div>
  </aside>
);

const ActionButton = ({ label, width, children }: { label: string; width: string; children: ReactNode }) => (
  <button className={`flex shrink-0 items-center gap-[8px] whitespace-nowrap ${width}`}>
    <svg width="22" height="22" viewBox="0 0 22 22" fill="none" stroke="#77777c" strokeWidth="1.500">
      {children}
    </svg>
    {label}
  </button>
);

const ActionBar = () => (
  <div className="flex h-[33px] shrink-0 items-center overflow-hidden bg-[#1c1c1e] pl-[9px] text-lg text-[#c4c4c4]">
    <ActionButton label="买入" width="w-[91px]">
      <path d="M9 1h4v8h4l-6 6-6-6h4zM1 15v5h20v-5" />
    </ActionButton>
    <ActionButton label="卖出" width="w-[89px]">
      <path d="M9 14h4V7h4l-6-6-6 6h4zM1 15v5h20v-5" />
    </ActionButton>
    <ActionButton label="撤单" width="w-[91px]">
      <path d="M8 20H2V1h17v10M5 6h5M5 10h8M15 14l-4 3 4 3M11 17h7c3 0 3-4 0-4" />
    </ActionButton>
    <ActionButton label="普通持仓" width="w-[126px]">
      <path d="M4 20V9H1l10-8 10 8h-3v12H4M8 11h6M8 15h6" />
    </ActionButton>
    <ActionButton label="信用持仓" width="w-[125px]">
      <path d="M4 20V9H1l10-8 10 8h-3v12H4M8 11h6M8 15h6" />
    </ActionButton>
    <ActionButton label="帮助" width="w-[90px]">
      <circle cx="11" cy="11" r="10" />
      <path d="M8 9c0-4 6-4 6-1 0 2-3 2-3 5M11 15v2" />
    </ActionButton>
    <ActionButton label="沪深市场" width="w-[126px]">
      <path d="M5 1H1v20h4M17 1h4v20h-4" />
      <circle cx="11" cy="10" r="5" strokeWidth="2.500" />
      <path d="M9 9h5M11 9v4" />
    </ActionButton>
    <ActionButton label="期权交易" width="w-[168px]">
      <path d="M1 21V2h8l2 3h10v16zM8 9l3 3 3-3M11 12v6M8 13h6M8 16h6" />
    </ActionButton>
    <button aria-label="添加" className="flex size-[23px] shrink-0 items-center justify-center rounded-sm bg-[#e8e8e8] text-xl leading-none text-[#777]">
      +
    </button>
    <div className="ml-[10px] flex min-w-0 flex-1 overflow-hidden border-l border-[#333] pl-[9px] text-[#e4e4e4]">
      <span className="w-[23px] shrink-0 whitespace-nowrap">:，</span>
      <a href="#" className="w-[187px] shrink-0">抛售电力设备股</a>
      <a href="#" className="w-[457px] shrink-0">发改委持续推动家电下乡，三条主线布局家电板块</a>
      <a href="#" className="whitespace-nowrap">20230721重要事件汇总（下）：草甘膦</a>
    </div>
  </div>
);

const indices = [
  ["上证", "3167.75", "-1.77", "-0.06%", "2807亿"],
  ["深证", "10810.2", "-6.09", "-0.06%", "4303亿"],
  ["北证", "846.98", "-2.92", "-0.34%", "14.39亿"],
];

const StatusBar = () => (
  <footer className="flex h-[27px] shrink-0 items-center overflow-hidden bg-[#232329] pl-[11px] pt-[3px] text-lg leading-none text-[#c4c4c4]">
    <button aria-label="指数" className="mr-[10px] flex size-[18px] shrink-0 items-center justify-center rounded-full bg-[#999] text-[#222]">
      <ChevronDown size={14} />
    </button>
    {indices.map(([name, price, diff, pct, amount]) => (
      <div key={name} className="flex shrink-0 whitespace-nowrap text-[#10a824]">
        <span className="w-[43px] text-[#c4c4c4]">{name}</span>
        <span className="w-[86px]">{price}</span>
        <span className="w-[61px]">{diff}</span>
        <span className="w-[68px]">{pct}</span>
        <span className="w-[71px] text-[#c4c4c4]">{amount}</span>
      </div>
    ))}
    <svg width="154" height="20" viewBox="0 0 154 20" className="ml-[5px] shrink-0">
      {[0, 78].map((x) => (
        <g key={x}>
          <rect x={x + 20} y="2" width="17" height="8" fill="#ff0000" />
          <rect x={x + 37} y="2" width="12" height="8" fill="#008000" />
          <path d={`M${x + 1} 1h73v10H${x + 1}zM${x + 19} 1v10M${x + 56} 1v10`} fill="none" stroke="#fff" strokeWidth="1.500" />
          <path d={`M${x + 6} 15h68M${x + 6} 19h68`} stroke="#ff0000" strokeWidth="3" strokeDasharray="9 3" />
        </g>
      ))}
    </svg>
    <svg width="22" height="20" viewBox="0 0 22 20" fill="none" stroke="#888" strokeWidth="1.500" className="ml-[14px] shrink-0">
      <circle cx="11" cy="9" r="2" />
      <path d="M11 11v9M7 13a5 5 0 0 1 0-8M15 5a5 5 0 0 1 0 8M4 16a9 9 0 0 1 0-14M18 2a9 9 0 0 1 0 14" />
    </svg>
    <span className="ml-[9px] mr-[6px] flex h-[19px] w-[19px] shrink-0 items-center justify-center rounded-sm bg-[#999] text-base text-white">3</span>
    <span className="whitespace-nowrap">已连接</span>
    <svg width="206" height="20" viewBox="0 0 206 20" fill="#77777b" className="ml-auto mr-[22px] shrink-0">
      <path d="M0 6h5l8-6v19l-8-6H0z" fill="#999" />
      <path d="M16 3l5-2M17 9h6M16 15l5 3" stroke="#999" strokeWidth="2" />
      <path d="M45 3h22v17H45z" />
      <path d="M48 8h16M48 12h16M51 16h10" stroke="#232329" strokeWidth="2" strokeDasharray="2 1" />
      <path d="M90 1h22v15h-9v3h-5v-3h-8z" />
      <path d="M92 9h5l2-4 3 8 2-4h6" stroke="#232329" strokeWidth="1.500" fill="none" />
      <path d="M140 0l14 13c-3 5-10 3-13-2-2-3-2-8-1-11zM141 13l-4 7h10l-2-5z" />
      <path d="M147 7l6-6" stroke="#77777b" strokeWidth="2" />
      <path d="M182 6h20v14h-20z" />
      <path d="M186 7l6-6 6 6" fill="none" stroke="#77777b" strokeWidth="2" />
      <path d="M185 11h14M185 15h9" stroke="#232329" strokeWidth="1.500" />
    </svg>
  </footer>
);

const SearchPill = () => (
  <div className="absolute right-[16px] top-[795px] flex h-[45px] w-[333px] items-center rounded-full bg-[#3a393f] pl-[19px] text-[21px] text-[#34b46c] shadow-[0_3px_8px_#000]">
    <span className="w-[96px] font-medium text-white">中富电路</span>
    <span className="w-[90px]">34.80</span>
    <span className="w-[86px]">-4.32%</span>
    <button aria-label="搜索" className="text-[#86868a]"><Search size={22} strokeWidth={1.5} /></button>
  </div>
);

const NetSpeed = () => (
  <div className="absolute right-0 top-[580px] flex h-[214px] w-[51px] flex-col items-center rounded-l-xl bg-[#15171d]/60 pt-[17px] text-[15px] leading-[19px] text-white">
    <span className="size-4 rounded-full bg-[#00bf63]" />
    <div className="mt-4 h-px w-10 bg-[#2b2d32]" />
    <div className="mt-3 flex h-[43px] w-[15px] items-end overflow-hidden rounded-full bg-[#4a4c50]/60">
      <div className="h-5 w-full bg-linear-to-b from-[#b8c030] to-[#30c0b0]" />
    </div>
    <div className="mt-[9px] h-px w-10 bg-[#2b2d32]" />
    <span className="mt-[13px]">1.2</span>
    <span className="flex items-center pl-2 leading-[19px] text-[#9a9a9a]">
      <svg width="9" height="10" viewBox="0 0 9 10" fill="#18a8ff"><path d="M4.500 0L9 5H6v5H3V5H0z" /></svg>
      M/s
    </span>
    <span className="mt-px">38.6</span>
    <span className="flex items-center gap-1 pl-2 leading-[18px] text-[#9a9a9a]">
      <svg width="9" height="10" viewBox="0 0 9 10" fill="#00c060"><path d="M4.500 10L9 5H6V0H3v5H0z" /></svg>
      K/s
    </span>
  </div>
);

export default function App() {
  return (
    <div className="relative flex min-h-screen flex-col overflow-hidden bg-[#0a0a0a] font-['Open_Sans','Noto_Sans_CJK_SC',sans-serif]">
      <Header />
      <div className="flex flex-1">
        <Sidebar />
        <ChartPanel />
        <CostPanel />
        <InfoPanel />
      </div>
      <ActionBar />
      <StatusBar />
      <NetSpeed />
      <SearchPill />
    </div>
  );
}
